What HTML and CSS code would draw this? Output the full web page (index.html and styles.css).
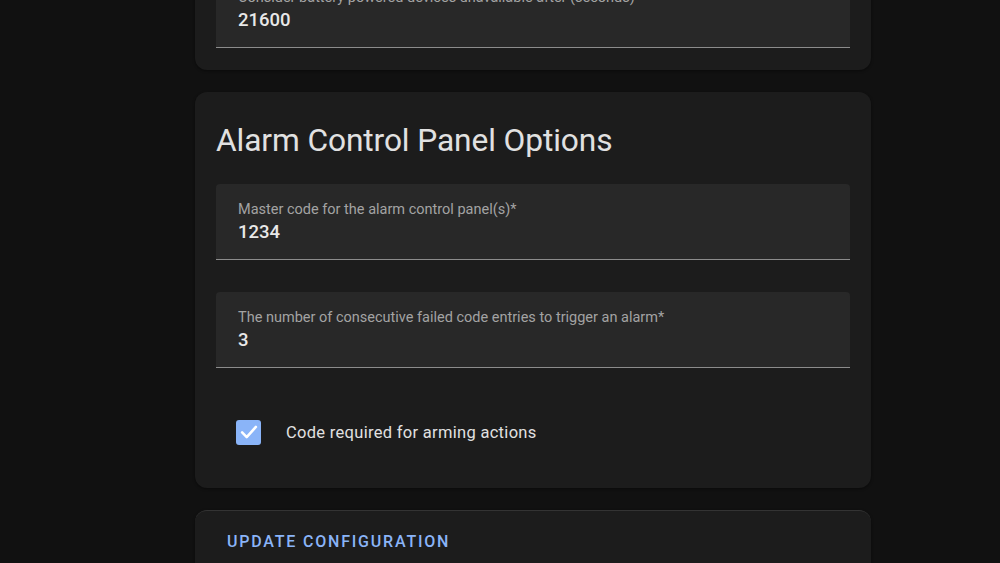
FILE: index.html
```html
<!DOCTYPE html>
<html lang="en">
<head>
<meta charset="utf-8">
<title>Alarm Control Panel Options</title>
<link rel="stylesheet" href="styles.css">
</head>
<body>
<main class="page">
  <section class="card card-top">
    <div class="field">
      <span class="field-label">Consider battery powered devices unavailable after (seconds)</span>
      <span class="field-value">21600</span>
    </div>
  </section>

  <section class="card card-options">
    <h1 class="card-title">Alarm Control Panel Options</h1>
    <div class="field">
      <span class="field-label">Master code for the alarm control panel(s)*</span>
      <span class="field-value">1234</span>
    </div>
    <div class="field field-second">
      <span class="field-label">The number of consecutive failed code entries to trigger an alarm*</span>
      <span class="field-value">3</span>
    </div>
    <label class="check-row">
      <span class="checkbox">
        <svg viewBox="0 0 24 24" width="22" height="22" aria-hidden="true"><path d="M4.5 12.5 L9.5 17.5 L19.5 6.5" fill="none" stroke="#ffffff" stroke-width="2.8" stroke-linecap="round" stroke-linejoin="round"/></svg>
      </span>
      <span class="check-label">Code required for arming actions</span>
    </label>
  </section>

  <section class="card card-actions">
    <span class="action-button">UPDATE CONFIGURATION</span>
  </section>
</main>
</body>
</html>
```

FILE: styles.css
```css
html, body {
  margin: 0;
  padding: 0;
  background: #111111;
  height: 100%;
  overflow: hidden;
  font-family: Roboto, "Noto Sans", "Liberation Sans", sans-serif;
}

.page {
  width: 676px;
  margin: -44px 0 0 195px;
  display: flex;
  flex-direction: column;
  gap: 22px;
}

.card {
  background: #1c1c1c;
  border-radius: 12px;
  box-shadow: 0 1px 3px rgba(0, 0, 0, 0.45);
  box-sizing: border-box;
}

.card-top {
  padding: 16px 21px 22px;
}

.card-options {
  padding: 21px 21px 32px;
  display: flex;
  flex-direction: column;
}

.card-title {
  margin: 0 0 15px;
  font-size: 31.7px;
  line-height: 56px;
  font-weight: 400;
  letter-spacing: -0.1px;
  color: #e1e1e1;
}

.field {
  height: 76px;
  box-sizing: border-box;
  background: #282828;
  border-radius: 4px 4px 0 0;
  border-bottom: 1px solid #8c8c8c;
  padding: 16px 22px 0;
  display: flex;
  flex-direction: column;
}

.field-second {
  margin-top: 32px;
}

.field-label {
  font-size: 14.5px;
  line-height: 20px;
  color: #a3a3a3;
  white-space: nowrap;
}

.field-value {
  font-size: 18.5px;
  line-height: 25px;
  font-weight: 500;
  color: #e8e8e8;
}

.check-row {
  margin-top: 40px;
  height: 48px;
  display: flex;
  align-items: center;
  padding-left: 20px;
  gap: 25px;
}

.checkbox {
  width: 25px;
  height: 25px;
  border-radius: 3px;
  background: #8ab4f8;
  display: flex;
  align-items: center;
  justify-content: center;
}

.check-label {
  font-size: 16.5px;
  color: #e1e1e1;
  letter-spacing: 0.3px;
}

.card-actions {
  border-top: 1px solid #333333;
  padding: 21px 32px 30px;
  height: 80px;
}

.action-button {
  display: inline-block;
  font-size: 16px;
  line-height: 20px;
  font-weight: 500;
  letter-spacing: 1.8px;
  color: #8ab4f8;
}
```
